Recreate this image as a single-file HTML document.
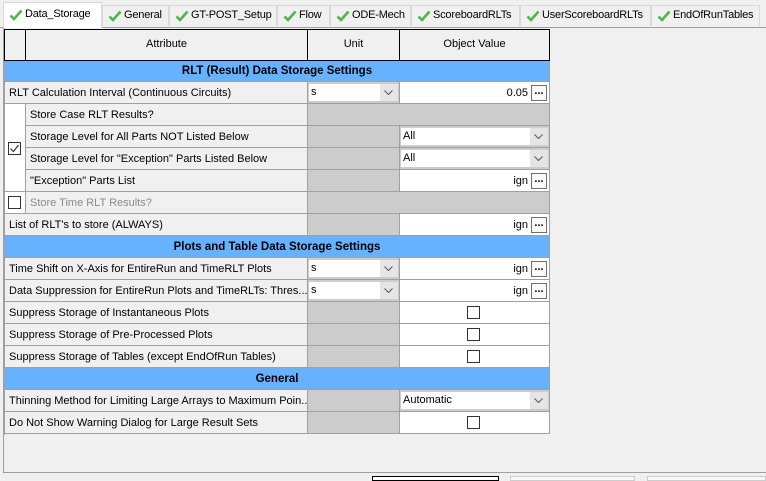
<!DOCTYPE html>
<html><head><meta charset="utf-8"><style>
*{box-sizing:border-box;margin:0;padding:0}
body{width:766px;height:479px;background:#f0f0f0;font-family:"Liberation Sans",sans-serif;font-size:11px;color:#000;position:relative;overflow:hidden}
.a{position:absolute}
.tab{position:absolute;top:5px;height:21px;border:1px solid #d9d9d9;border-bottom:none;background:#f0f0f0;font-size:11px;letter-spacing:-0.2px;line-height:19px;padding-left:21px;white-space:nowrap}
.tab svg{position:absolute;left:5px;top:4px}
.c{position:absolute;border-right:1px solid #a0a0a0;border-bottom:1px solid #a0a0a0;height:22px;line-height:22px;white-space:nowrap;overflow:hidden}
.at{background:#f0f0f0;padding-left:4px}
.gr{background:#cccccc}
.wh{background:#fff}
.bl{background:#66b2ff;font-weight:bold;text-align:center;font-size:11.5px}
.cb{position:absolute;width:13px;height:13px;border:1px solid #333;background:#fff}
.combo{position:absolute;top:2px;height:17px;background:#e5e5e5}
.combo .f{position:absolute;left:0;top:0;bottom:0;background:#fff;padding-left:2px;line-height:17px}
.combo svg{position:absolute;right:5px;top:6px}
.btn{position:absolute;right:2px;top:3px;width:16px;height:16px;border:1px solid #707070;background:#fafafa;font-weight:bold;line-height:10px;text-align:center;font-size:11px}
.ign{position:absolute;right:21px;top:0}
</style></head><body>
<svg width="0" height="0" style="position:absolute"><defs><symbol id="ck" viewBox="0 0 14 12"><path d="M1.5 6.5 L5 10 L12.5 1.5" stroke="#4cb848" stroke-width="2.6" fill="none"/></symbol></defs></svg>
<div class="a" style="left:0;top:27px;width:766px;height:1px;background:#a0a0a0"></div>
<div class="tab" style="left:3px;top:2px;width:99px;height:26px;background:#fff;line-height:23px"><svg width="14" height="12" style="top:6px"><use href="#ck"/></svg>Data_Storage</div>
<div class="tab" style="left:102px;width:67px"><svg width="14" height="12"><use href="#ck"/></svg>General</div>
<div class="tab" style="left:169px;width:108px"><svg width="14" height="12"><use href="#ck"/></svg>GT-POST_Setup</div>
<div class="tab" style="left:277px;width:53px"><svg width="14" height="12"><use href="#ck"/></svg>Flow</div>
<div class="tab" style="left:330px;width:81px"><svg width="14" height="12"><use href="#ck"/></svg>ODE-Mech</div>
<div class="tab" style="left:411px;width:109px"><svg width="14" height="12"><use href="#ck"/></svg>ScoreboardRLTs</div>
<div class="tab" style="left:520px;width:131px"><svg width="14" height="12"><use href="#ck"/></svg>UserScoreboardRLTs</div>
<div class="tab" style="left:651px;width:109px"><svg width="14" height="12"><use href="#ck"/></svg>EndOfRunTables</div>
<!-- panel -->
<div class="a" style="left:3px;top:28px;width:1px;height:444px;background:#a0a0a0"></div>
<div class="a" style="left:3px;top:472px;width:763px;height:1px;background:#a0a0a0"></div>
<div class="a" style="left:372px;top:476px;width:127px;height:5px;border:1px solid #000;background:#fff"></div>
<div class="a" style="left:510px;top:476px;width:125px;height:5px;border:1px solid #ccc;background:#f8f8f8"></div>
<div class="a" style="left:647px;top:476px;width:119px;height:5px;border:1px solid #ccc;background:#f8f8f8"></div>
<!-- header -->
<div class="a" style="left:4px;top:29px;width:546px;height:32px;border:1px solid #000;background:#f0f0f0"></div>
<div class="a" style="left:25px;top:29px;width:1px;height:32px;background:#000"></div>
<div class="a" style="left:307px;top:29px;width:1px;height:32px;background:#000"></div>
<div class="a" style="left:399px;top:29px;width:1px;height:32px;background:#000"></div>
<div class="a" style="left:26px;top:38px;width:281px;text-align:center">Attribute</div>
<div class="a" style="left:308px;top:38px;width:91px;text-align:center">Unit</div>
<div class="a" style="left:400px;top:38px;width:149px;text-align:center">Object Value</div>
<div class="a" style="left:4px;top:61px;width:1px;height:374px;background:#a0a0a0"></div>

<div class="c bl" style="left:5px;top:61px;width:545px;height:21px;line-height:21px">RLT (Result) Data Storage Settings</div>
<div class="c at" style="left:5px;top:82px;width:303px">RLT Calculation Interval (Continuous Circuits)</div>
<div class="c gr" style="left:308px;top:82px;width:92px"><div class="combo" style="left:1px;width:89px"><div class="f" style="width:71px">s</div><svg width="9" height="5"><path d="M0.5 0.5 L4.5 4.5 L8.5 0.5" stroke="#555" fill="none"/></svg></div></div>
<div class="c wh" style="left:400px;top:82px;width:150px"><span class="ign">0.05</span><div class="btn">...</div></div>
<div class="c wh" style="left:5px;top:104px;width:21px;height:88px"></div>
<div class="cb" style="left:8px;top:142px"><svg width="11" height="11" style="position:absolute;left:0;top:0"><path d="M1.5 5.5 L4.5 8.5 L9.5 2" stroke="#333" stroke-width="1.2" fill="none"/></svg></div>
<div class="c at" style="left:26px;top:104px;width:282px">Store Case RLT Results?</div>
<div class="c gr" style="left:308px;top:104px;width:242px"></div>
<div class="c at" style="left:26px;top:126px;width:282px">Storage Level for All Parts NOT Listed Below</div>
<div class="c gr" style="left:308px;top:126px;width:92px"></div>
<div class="c gr" style="left:400px;top:126px;width:150px"><div class="combo" style="left:1px;width:147px"><div class="f" style="width:129px">All</div><svg width="9" height="5"><path d="M0.5 0.5 L4.5 4.5 L8.5 0.5" stroke="#555" fill="none"/></svg></div></div>
<div class="c at" style="left:26px;top:148px;width:282px">Storage Level for "Exception" Parts Listed Below</div>
<div class="c gr" style="left:308px;top:148px;width:92px"></div>
<div class="c gr" style="left:400px;top:148px;width:150px"><div class="combo" style="left:1px;width:147px"><div class="f" style="width:129px">All</div><svg width="9" height="5"><path d="M0.5 0.5 L4.5 4.5 L8.5 0.5" stroke="#555" fill="none"/></svg></div></div>
<div class="c at" style="left:26px;top:170px;width:282px">"Exception" Parts List</div>
<div class="c gr" style="left:308px;top:170px;width:92px"></div>
<div class="c wh" style="left:400px;top:170px;width:150px"><span class="ign">ign</span><div class="btn">...</div></div>
<div class="c wh" style="left:5px;top:192px;width:21px"></div>
<div class="cb" style="left:8px;top:196px"></div>
<div class="c at" style="left:26px;top:192px;width:282px;color:#8a8a8a">Store Time RLT Results?</div>
<div class="c gr" style="left:308px;top:192px;width:242px"></div>
<div class="c at" style="left:5px;top:214px;width:303px">List of RLT's to store (ALWAYS)</div>
<div class="c gr" style="left:308px;top:214px;width:92px"></div>
<div class="c wh" style="left:400px;top:214px;width:150px"><span class="ign">ign</span><div class="btn">...</div></div>

<div class="c bl" style="left:5px;top:236px;width:545px">Plots and Table Data Storage Settings</div>
<div class="c at" style="left:5px;top:258px;width:303px">Time Shift on X-Axis for EntireRun and TimeRLT Plots</div>
<div class="c gr" style="left:308px;top:258px;width:92px"><div class="combo" style="left:1px;width:89px"><div class="f" style="width:71px">s</div><svg width="9" height="5"><path d="M0.5 0.5 L4.5 4.5 L8.5 0.5" stroke="#555" fill="none"/></svg></div></div>
<div class="c wh" style="left:400px;top:258px;width:150px"><span class="ign">ign</span><div class="btn">...</div></div>
<div class="c at" style="left:5px;top:280px;width:303px">Data Suppression for EntireRun Plots and TimeRLTs: Thres...</div>
<div class="c gr" style="left:308px;top:280px;width:92px"><div class="combo" style="left:1px;width:89px"><div class="f" style="width:71px">s</div><svg width="9" height="5"><path d="M0.5 0.5 L4.5 4.5 L8.5 0.5" stroke="#555" fill="none"/></svg></div></div>
<div class="c wh" style="left:400px;top:280px;width:150px"><span class="ign">ign</span><div class="btn">...</div></div>
<div class="c at" style="left:5px;top:302px;width:303px">Suppress Storage of Instantaneous Plots</div>
<div class="c gr" style="left:308px;top:302px;width:92px"></div>
<div class="c wh" style="left:400px;top:302px;width:150px"><div class="cb" style="left:67px;top:4px"></div></div>
<div class="c at" style="left:5px;top:324px;width:303px">Suppress Storage of Pre-Processed Plots</div>
<div class="c gr" style="left:308px;top:324px;width:92px"></div>
<div class="c wh" style="left:400px;top:324px;width:150px"><div class="cb" style="left:67px;top:4px"></div></div>
<div class="c at" style="left:5px;top:346px;width:303px">Suppress Storage of Tables (except EndOfRun Tables)</div>
<div class="c gr" style="left:308px;top:346px;width:92px"></div>
<div class="c wh" style="left:400px;top:346px;width:150px"><div class="cb" style="left:67px;top:4px"></div></div>

<div class="c bl" style="left:5px;top:368px;width:545px">General</div>
<div class="c at" style="left:5px;top:390px;width:303px">Thinning Method for Limiting Large Arrays to Maximum Poin...</div>
<div class="c gr" style="left:308px;top:390px;width:92px"></div>
<div class="c gr" style="left:400px;top:390px;width:150px"><div class="combo" style="left:1px;width:147px"><div class="f" style="width:129px">Automatic</div><svg width="9" height="5"><path d="M0.5 0.5 L4.5 4.5 L8.5 0.5" stroke="#555" fill="none"/></svg></div></div>
<div class="c at" style="left:5px;top:412px;width:303px">Do Not Show Warning Dialog for Large Result Sets</div>
<div class="c gr" style="left:308px;top:412px;width:92px"></div>
<div class="c wh" style="left:400px;top:412px;width:150px"><div class="cb" style="left:67px;top:4px"></div></div>
</body></html>
